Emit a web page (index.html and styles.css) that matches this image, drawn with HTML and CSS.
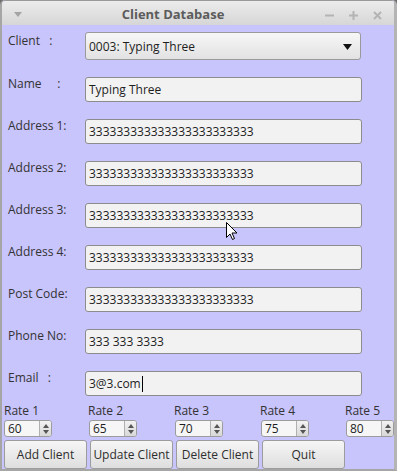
FILE: index.html
```html
<!DOCTYPE html>
<html>
<head>
<meta charset="utf-8">
<link rel="stylesheet" href="styles.css">
</head>
<body>
<div class="window">
  <div class="titlebar">
    <svg class="tb-menu" width="8" height="5" viewBox="0 0 8 5"><path d="M0 0H8L4 5Z" fill="#a4a4a4"/></svg>
    <div class="title">Client Database</div>
    <div class="tb-buttons">
      <svg width="9" height="9" viewBox="0 0 9 9"><rect x="0" y="3.5" width="9" height="2" fill="#b4b4b4"/></svg>
      <svg width="9" height="9" viewBox="0 0 9 9"><rect x="0" y="3.5" width="9" height="2" fill="#b4b4b4"/><rect x="3.5" y="0" width="2" height="9" fill="#b4b4b4"/></svg>
      <svg width="9" height="9" viewBox="0 0 9 9"><path d="M1 1L8 8M8 1L1 8" stroke="#b4b4b4" stroke-width="2"/></svg>
    </div>
  </div>
  <div class="content">
    <div class="form">
      <div class="row row-combo">
        <div class="label">Client&nbsp;&nbsp;&nbsp;:</div>
        <div class="combo"><span>0003: Typing Three</span><svg width="9" height="6" viewBox="0 0 9 6"><path d="M0 0H9L4.5 6Z" fill="#111"/></svg></div>
      </div>
      <div class="row">
        <div class="label">Name&nbsp;&nbsp;&nbsp;&nbsp;&nbsp;:</div>
        <div class="field">Typing Three</div>
      </div>
      <div class="row">
        <div class="label">Address 1:</div>
        <div class="field">333333333333333333333333</div>
      </div>
      <div class="row">
        <div class="label">Address 2:</div>
        <div class="field">333333333333333333333333</div>
      </div>
      <div class="row">
        <div class="label">Address 3:</div>
        <div class="field">333333333333333333333333</div>
      </div>
      <div class="row">
        <div class="label">Address 4:</div>
        <div class="field">333333333333333333333333</div>
      </div>
      <div class="row">
        <div class="label">Post Code:</div>
        <div class="field">333333333333333333333333</div>
      </div>
      <div class="row">
        <div class="label">Phone No:</div>
        <div class="field">333 333 3333</div>
      </div>
      <div class="row">
        <div class="label">Email&nbsp;&nbsp;&nbsp;:</div>
        <div class="field">3@3.com<span class="caret"></span></div>
      </div>
    </div>
    <div class="rates">
      <div class="rate"><div class="rate-label">Rate 1</div><div class="spin"><span class="spin-val">60</span><span class="spin-arrows"><i class="up"></i><i class="down"></i></span></div></div>
      <div class="rate"><div class="rate-label">Rate 2</div><div class="spin"><span class="spin-val">65</span><span class="spin-arrows"><i class="up"></i><i class="down"></i></span></div></div>
      <div class="rate"><div class="rate-label">Rate 3</div><div class="spin"><span class="spin-val">70</span><span class="spin-arrows"><i class="up"></i><i class="down"></i></span></div></div>
      <div class="rate"><div class="rate-label">Rate 4</div><div class="spin"><span class="spin-val">75</span><span class="spin-arrows"><i class="up"></i><i class="down"></i></span></div></div>
      <div class="rate"><div class="rate-label">Rate 5</div><div class="spin"><span class="spin-val">80</span><span class="spin-arrows"><i class="up"></i><i class="down"></i></span></div></div>
    </div>
    <div class="buttons">
      <div class="btn">Add Client</div>
      <div class="btn">Update Client</div>
      <div class="btn">Delete Client</div>
      <div class="btn">Quit</div>
    </div>
  </div>
  <svg class="pointer" width="13" height="19" viewBox="0 0 13 19"><path d="M0.5 0.5V15.5L4 12L6.5 17.5L8.5 16.5L6 11H11Z" fill="#fff" stroke="#000" stroke-width="1"/></svg>
</div>
</body>
</html>
```
FILE: styles.css
```css
* { box-sizing: border-box; }
html, body { margin: 0; padding: 0; }
body {
  width: 397px;
  height: 471px;
  background: #6e6e6e;
  font-family: "Open Sans", "Noto Sans", sans-serif;
  font-size: 12px;
  color: #2e2e2e;
  overflow: hidden;
}
.window {
  position: relative;
  width: 397px;
  height: 471px;
  display: flex;
  flex-direction: column;
  border-radius: 5px 5px 0 0;
  overflow: hidden;
  background: #c8c4fc;
  border-left: 2px solid #a6a6a6;
  border-right: 3px solid #b4b4b4;
  border-bottom: 2px solid #a6a6a6;
}
.titlebar {
  height: 25px;
  flex: none;
  margin-left: -2px;
  margin-right: -3px;
  display: flex;
  align-items: center;
  background: linear-gradient(#ececec, #d6d6d6);
  border-top: 1px solid #9a9a9a;
  border-radius: 5px 5px 0 0;
  position: relative;
}
.tb-menu { position: absolute; left: 14px; top: 11px; }
.title {
  flex: 1;
  text-align: center;
  font-weight: bold;
  font-size: 13px;
  color: #5c5c5c;
  padding-right: 51px;
  margin-top: 1px;
}
.tb-buttons {
  position: absolute;
  right: 15px;
  top: 10px;
  display: flex;
  gap: 15px;
}
.content {
  flex: 1;
  display: flex;
  flex-direction: column;
  padding: 7px 0 0 2px;
}
.form {
  display: flex;
  flex-direction: column;
  gap: 17px;
  padding-left: 4px;
}
.row {
  display: flex;
  align-items: flex-start;
  height: 25px;
}
.row-combo { height: 28px; }
.label {
  width: 77px;
  line-height: 16px;
  margin-top: -1px;
  white-space: nowrap;
  color: #333;
}
.row-combo .label { margin-top: 1px; }
.field {
  width: 277px;
  height: 25px;
  background: #f2f2f2;
  border: 1px solid #8c8c8c;
  border-radius: 3px;
  padding: 0 3px;
  line-height: 23px;
  color: #1e1e1e;
  display: flex;
  align-items: center;
  white-space: nowrap;
}
.caret {
  display: inline-block;
  width: 1px;
  height: 16px;
  background: #000;
  margin-left: 1px;
}
.combo {
  width: 276px;
  height: 28px;
  background: linear-gradient(#f7f7f7, #e2e2e2);
  border: 1px solid #9a9a9a;
  border-radius: 3px;
  display: flex;
  align-items: center;
  justify-content: space-between;
  padding: 0 8px 0 3px;
  color: #1e1e1e;
}
.combo svg { margin-top: 1px; }
.rates {
  display: grid;
  grid-template-columns: 84px 86px 86px 85px 48px;
  margin-top: 7px;
}
.rate-label {
  line-height: 16px;
  color: #333;
  white-space: nowrap;
}
.rate:nth-child(n+2) .spin { margin-left: 1px; }
.spin {
  margin-top: 1px;
  width: 48px;
  height: 17px;
  background: #f6f6f6;
  border: 1px solid #9c9c9c;
  border-radius: 3px;
  display: flex;
  overflow: hidden;
}
.spin-val {
  flex: 1;
  padding-left: 3px;
  line-height: 15px;
  color: #1e1e1e;
}
.spin-arrows {
  width: 12px;
  border-left: 1px solid #b0b0b0;
  background: linear-gradient(#f2f2f2, #d8d8d8);
  display: flex;
  flex-direction: column;
  align-items: center;
  justify-content: center;
  gap: 2px;
}
.spin-arrows i {
  width: 0;
  height: 0;
  border-left: 3px solid transparent;
  border-right: 3px solid transparent;
}
.spin-arrows .up { border-bottom: 4px solid #555; }
.spin-arrows .down { border-top: 4px solid #555; }
.buttons {
  display: flex;
  gap: 3px;
  margin-top: 3px;
}
.btn {
  width: 83px;
  height: 29px;
  background: linear-gradient(#f6f6f6, #dedede);
  border: 1px solid #9c9c9c;
  border-radius: 3px;
  display: flex;
  align-items: center;
  justify-content: center;
  color: #2e2e2e;
  white-space: nowrap;
}
.pointer {
  position: absolute;
  left: 224px;
  top: 222px;
}
```
